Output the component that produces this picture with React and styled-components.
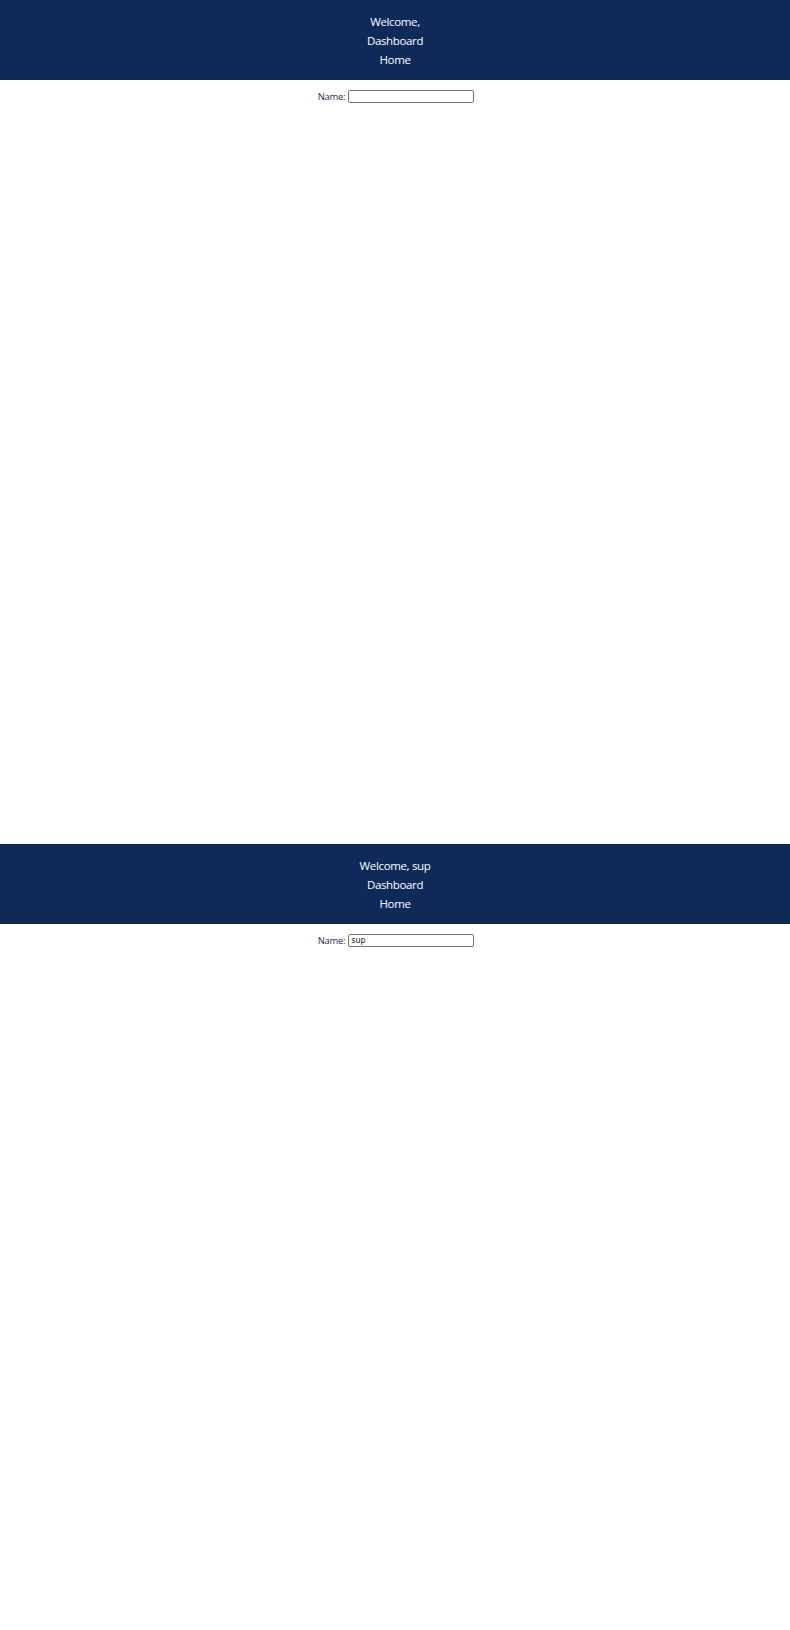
import React from 'react'
import styled, {createGlobalStyle} from 'styled-components'

const Global = createGlobalStyle`
    body {
        margin: 0;
        background: white;
        font-family: "Open Sans", "Noto Sans", sans-serif;
    }
`;

const Page = styled.section`
    min-height: 844px;
    display: flex;
    flex-direction: column;
`;

const NavBar = styled.nav`
    background: #0e2a58;
    height: 80px;
    box-sizing: border-box;
    display: flex;
    flex-direction: column;
    align-items: center;
    justify-content: center;
    gap: 4px;
    padding-top: 1px;
`;

const NavItem = styled.span`
    color: white;
    font-size: 11.5px;
    line-height: 15px;
    letter-spacing: -0.35px;
    cursor: pointer;
`;

const Form = styled.form`
    display: flex;
    justify-content: center;
    align-items: center;
    gap: 3px;
    padding-top: 10px;
    margin-left: 2px;
`;

const Label = styled.label`
    color: #1c2f5c;
    font-size: 9.5px;
    letter-spacing: -0.3px;
`;

const Input = styled.input`
    width: 126px;
    height: 13px;
    box-sizing: border-box;
    border: 1px solid #767676;
    border-radius: 2px;
    padding: 0 2px;
    font-family: "DejaVu Sans", sans-serif;
    font-size: 8px;
    color: #111;
    outline: none;
`;

const Screen = ({name}) => {
    return (
        <Page>
            <NavBar>
                <NavItem>Welcome, {name}</NavItem>
                <NavItem>Dashboard</NavItem>
                <NavItem>Home</NavItem>
            </NavBar>
            <Form onSubmit={e => e.preventDefault()}>
                <Label htmlFor={'name-' + name}>Name:</Label>
                <Input id={'name-' + name} type="text" defaultValue={name} />
            </Form>
        </Page>
    )
}

export default function App() {
    return (
        <>
            <Global />
            <Screen name="" />
            <Screen name="sup" />
        </>
    )
}
